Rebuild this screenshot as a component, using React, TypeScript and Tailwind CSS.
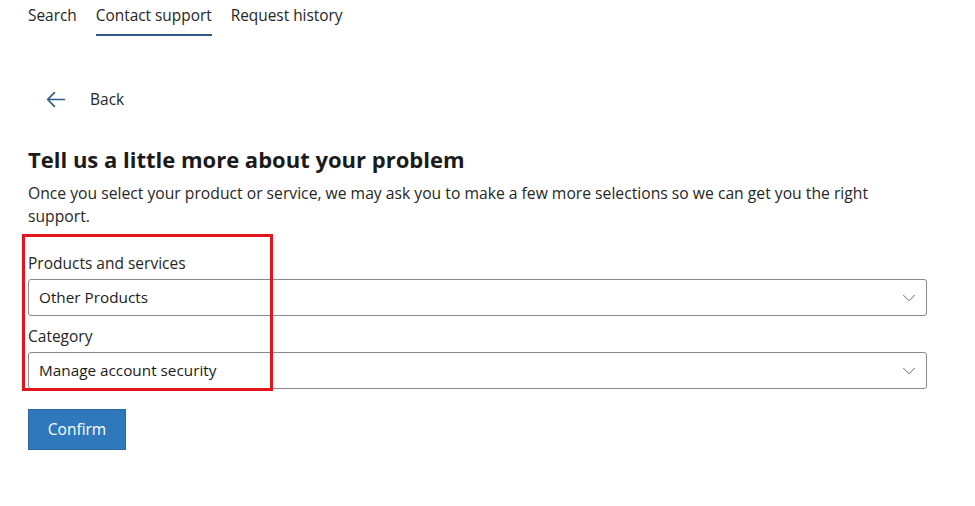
import { ChevronDown } from 'lucide-react';

function SelectBox({ value }: { value: string }) {
  return (
    <div className="flex h-[37px] w-[899px] items-center justify-between rounded-[3px] border border-[#8a8a8a] bg-white pl-[10px] pr-[6px]">
      <span className="text-[15.3px] text-[#1b1b1b]">{value}</span>
      <ChevronDown className="h-[22px] w-[22px] text-[#5f5f5f]" strokeWidth={1} />
    </div>
  );
}

function BackArrow({ className }: { className?: string }) {
  return (
    <svg className={className} fill="none" viewBox="0 0 20 20" stroke="currentColor">
      <path strokeLinecap="round" strokeLinejoin="round" strokeWidth={1.6} d="M18.5 10H2.5m6.5-6.5L2.5 10 9 16.5" />
    </svg>
  );
}

export default function App() {
  return (
    <div
      className="relative h-[506px] w-[975px] overflow-hidden bg-white text-[#1b1b1b]"
      style={{ fontFamily: '"Open Sans", "Noto Sans", sans-serif' }}
    >
      <nav className="flex gap-[19px] pl-[28px] pt-[4px] text-[15.4px]">
        <span className="h-[32px] text-[#262626]">Search</span>
        <span className="h-[32px] border-b-2 border-[#2f5a86] text-[#262626]">Contact support</span>
        <span className="h-[32px] text-[#262626]">Request history</span>
      </nav>

      <button className="ml-[45px] mt-[52px] flex items-center gap-[24px] text-[15.5px] text-[#262626]">
        <BackArrow className="h-[21px] w-[21px] text-[#2f5a86]" />
        Back
      </button>

      <main className="px-[28px] pt-[33px]">
        <h1 className="text-[22px] font-bold leading-[30px] text-[#1b1b1b]">Tell us a little more about your problem</h1>
        <p className="mt-[8px] w-[880px] text-[15.7px] leading-[23px] text-[#262626]">
          Once you select your product or service, we may ask you to make a few more selections so we can get you the right support.
        </p>

        <div className="mt-[24px] flex flex-col">
          <label className="text-[15.5px] leading-[22px] text-[#262626]">Products and services</label>
          <div className="mt-[5px]">
            <SelectBox value="Other Products" />
          </div>
          <label className="mt-[9px] text-[15.5px] leading-[22px] text-[#262626]">Category</label>
          <div className="mt-[5px]">
            <SelectBox value="Manage account security" />
          </div>
        </div>

        <button className="mt-[20px] h-[41px] w-[98px] border border-[#2a6aa3] bg-[#2f78bc] text-[15.5px] text-white">
          Confirm
        </button>
      </main>

      <div className="pointer-events-none absolute left-[22px] top-[234px] h-[157px] w-[251px] border-[3px] border-[#e3141b]" />
    </div>
  );
}
